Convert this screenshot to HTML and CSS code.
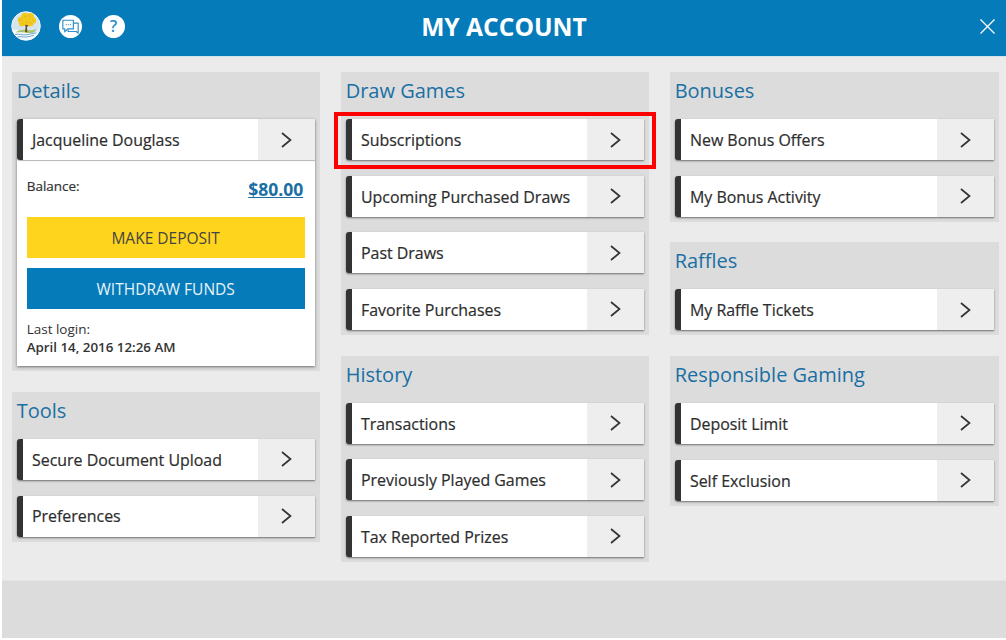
FILE: index.html
```html
<!DOCTYPE html>
<html lang="en">
<head>
<meta charset="utf-8">
<title>My Account</title>
<link rel="stylesheet" href="styles.css">
</head>
<body>
<div class="app">
  <header class="topbar">
    <div class="top-icons">
      <svg class="logo" viewBox="0 0 30 30" width="30" height="30" aria-hidden="true">
        <circle cx="15" cy="15" r="14.3" fill="#d5e5f0" stroke="#eaf2f7" stroke-width="1"/>
        <path d="M1.500 19c4-.5 8 .5 13.500 2.500s9 .5 13.500-2.500c-1 6-7 10-13.500 10S2.500 25 1.500 19z" fill="#f6fafc"/>
        <path d="M4.500 21.500c3-2.500 7-3 11-2.500s7 .5 10-1.500l-2 3.500c-4 1.500-7 1-10 .5s-6-.5-9 0z" fill="#a9c46e"/>
        <path d="M4 23.500c4-1 7 .8 11 .3s7-1.800 10.500-1.800M6.500 26c3-1 6 .5 9 0s5-1 7.500-1.800" fill="none" stroke="#5f9fcb" stroke-width=".9"/>
        <path d="M14.100 21l.5-6-2.800-2.800.8-.5 2.300 2 .5-3h1l-.4 3.500 2.400-1.700.6.600-3 2.800.4 5.600z" fill="#6b4a1f"/>
        <g fill="#f2c91e">
          <circle cx="10" cy="9" r="3.200"/>
          <circle cx="14" cy="5.500" r="3.800"/>
          <circle cx="19.500" cy="5.500" r="3.500"/>
          <circle cx="22" cy="9.500" r="3.200"/>
          <circle cx="15.500" cy="9.500" r="4.500"/>
          <circle cx="11" cy="12.500" r="3"/>
          <circle cx="19.500" cy="12.500" r="3"/>
        </g>
        <path d="M9 8.500l1.500 1M13 5l1.500 1M18 4.500l1.500 1.500M21 9l1 1M15 11l1.500.5M11 12.500l1 .5M19 12l1 .5" stroke="#c9a210" stroke-width=".6" fill="none"/>
      </svg>
      <span class="round-icon">
        <svg viewBox="0 0 24 24" width="23" height="23" aria-hidden="true">
          <path d="M4 5.500h11v9H9l-3 3v-3H4z" fill="#fff" stroke="#2f8fc9" stroke-width="1.200" stroke-linejoin="round"/>
          <path d="M15.500 8.500H20v10.500l-2-1.800H9.500v-2.200" fill="none" stroke="#2f8fc9" stroke-width="1.200" stroke-linejoin="round"/>
          <path d="M7 10h.9M9.200 10h.9M11.400 10h.9" stroke="#2f8fc9" stroke-width="1.200"/>
        </svg>
      </span>
      <span class="round-icon help">?</span>
    </div>
    <h1 class="page-title">MY ACCOUNT</h1>
    <svg class="close" viewBox="0 0 15 15" width="15" height="15" aria-hidden="true">
      <path d="M.5.500l14 14M14.500.500l-14 14" stroke="#fff" stroke-width="1.300" fill="none"/>
    </svg>
  </header>

  <main class="content">
    <div class="col">
      <section class="panel">
        <h2 class="panel-title">Details</h2>
        <div class="card">
          <a class="row row-name"><span class="row-label">Jacqueline Douglass</span><span class="row-arrow"><svg class="chev" viewBox="0 0 11 16" width="11" height="16"><path d="M1 1l8.500 7L1 15" fill="none" stroke="#333" stroke-width="1.700"/></svg></span></a>
          <div class="card-body">
            <div class="balance"><span class="balance-label">Balance:</span><span class="balance-value">$80.00</span></div>
            <div class="btn btn-yellow">MAKE DEPOSIT</div>
            <div class="btn btn-blue">WITHDRAW FUNDS</div>
            <p class="login">Last login:</p>
            <p class="login login-date">April 14, 2016 12:26 AM</p>
          </div>
        </div>
      </section>
      <section class="panel">
        <h2 class="panel-title">Tools</h2>
        <a class="row"><span class="row-label">Secure Document Upload</span><span class="row-arrow"><svg class="chev" viewBox="0 0 11 16" width="11" height="16"><path d="M1 1l8.500 7L1 15" fill="none" stroke="#333" stroke-width="1.700"/></svg></span></a>
        <a class="row"><span class="row-label">Preferences</span><span class="row-arrow"><svg class="chev" viewBox="0 0 11 16" width="11" height="16"><path d="M1 1l8.500 7L1 15" fill="none" stroke="#333" stroke-width="1.700"/></svg></span></a>
      </section>
    </div>

    <div class="col">
      <section class="panel">
        <h2 class="panel-title">Draw Games</h2>
        <a class="row row-marked"><span class="row-label">Subscriptions</span><span class="row-arrow"><svg class="chev" viewBox="0 0 11 16" width="11" height="16"><path d="M1 1l8.500 7L1 15" fill="none" stroke="#333" stroke-width="1.700"/></svg></span></a>
        <a class="row"><span class="row-label">Upcoming Purchased Draws</span><span class="row-arrow"><svg class="chev" viewBox="0 0 11 16" width="11" height="16"><path d="M1 1l8.500 7L1 15" fill="none" stroke="#333" stroke-width="1.700"/></svg></span></a>
        <a class="row"><span class="row-label">Past Draws</span><span class="row-arrow"><svg class="chev" viewBox="0 0 11 16" width="11" height="16"><path d="M1 1l8.500 7L1 15" fill="none" stroke="#333" stroke-width="1.700"/></svg></span></a>
        <a class="row"><span class="row-label">Favorite Purchases</span><span class="row-arrow"><svg class="chev" viewBox="0 0 11 16" width="11" height="16"><path d="M1 1l8.500 7L1 15" fill="none" stroke="#333" stroke-width="1.700"/></svg></span></a>
      </section>
      <section class="panel">
        <h2 class="panel-title">History</h2>
        <a class="row"><span class="row-label">Transactions</span><span class="row-arrow"><svg class="chev" viewBox="0 0 11 16" width="11" height="16"><path d="M1 1l8.500 7L1 15" fill="none" stroke="#333" stroke-width="1.700"/></svg></span></a>
        <a class="row"><span class="row-label">Previously Played Games</span><span class="row-arrow"><svg class="chev" viewBox="0 0 11 16" width="11" height="16"><path d="M1 1l8.500 7L1 15" fill="none" stroke="#333" stroke-width="1.700"/></svg></span></a>
        <a class="row"><span class="row-label">Tax Reported Prizes</span><span class="row-arrow"><svg class="chev" viewBox="0 0 11 16" width="11" height="16"><path d="M1 1l8.500 7L1 15" fill="none" stroke="#333" stroke-width="1.700"/></svg></span></a>
      </section>
    </div>

    <div class="col col-wide">
      <section class="panel">
        <h2 class="panel-title">Bonuses</h2>
        <a class="row"><span class="row-label">New Bonus Offers</span><span class="row-arrow"><svg class="chev" viewBox="0 0 11 16" width="11" height="16"><path d="M1 1l8.500 7L1 15" fill="none" stroke="#333" stroke-width="1.700"/></svg></span></a>
        <a class="row"><span class="row-label">My Bonus Activity</span><span class="row-arrow"><svg class="chev" viewBox="0 0 11 16" width="11" height="16"><path d="M1 1l8.500 7L1 15" fill="none" stroke="#333" stroke-width="1.700"/></svg></span></a>
      </section>
      <section class="panel">
        <h2 class="panel-title">Raffles</h2>
        <a class="row"><span class="row-label">My Raffle Tickets</span><span class="row-arrow"><svg class="chev" viewBox="0 0 11 16" width="11" height="16"><path d="M1 1l8.500 7L1 15" fill="none" stroke="#333" stroke-width="1.700"/></svg></span></a>
      </section>
      <section class="panel">
        <h2 class="panel-title">Responsible Gaming</h2>
        <a class="row"><span class="row-label">Deposit Limit</span><span class="row-arrow"><svg class="chev" viewBox="0 0 11 16" width="11" height="16"><path d="M1 1l8.500 7L1 15" fill="none" stroke="#333" stroke-width="1.700"/></svg></span></a>
        <a class="row"><span class="row-label">Self Exclusion</span><span class="row-arrow"><svg class="chev" viewBox="0 0 11 16" width="11" height="16"><path d="M1 1l8.500 7L1 15" fill="none" stroke="#333" stroke-width="1.700"/></svg></span></a>
      </section>
    </div>
  </main>

  <footer class="footer"></footer>
</div>
</body>
</html>
```
FILE: styles.css
```css
* { box-sizing: border-box; }
html, body { margin: 0; padding: 0; background: #fff; }
body { font-family: "Open Sans", "Liberation Sans", sans-serif; color: #333; overflow: hidden; }

.app { margin-left: 2px; width: 1004px; height: 638px; display: flex; flex-direction: column; background: #ebebeb; }

.topbar { height: 57px; flex: none; background: #067bba; border-bottom: 1px solid #cfe3ee; display: flex; align-items: center; justify-content: space-between; position: relative; padding: 0 11px 3px 9px; }
.top-icons { display: flex; align-items: center; }
.logo { display: block; margin: -2px 18px 0 0; }
.round-icon { width: 23px; height: 23px; border-radius: 50%; background: #fff; display: flex; align-items: center; justify-content: center; margin-right: 20px; }
.help { color: #2f8fc9; font-weight: 600; font-size: 16.500px; line-height: 1; }
.page-title { position: absolute; left: 0; right: 0; top: 11px; margin: 0; text-align: center; color: #fff; font-size: 24.600px; line-height: 32px; font-weight: 700; }
.close { display: block; }

.content { flex: 1; display: flex; padding: 15px 0 0 9.670px; gap: 20.670px; }
.col { width: 308.330px; flex: none; display: flex; flex-direction: column; gap: 20.670px; }
.col-wide { width: 329.330px; }

.panel { background: #dcdcdc; padding: 0 5px 5px 5px; }
.panel-title { margin: 0; height: 47px; padding-top: 5px; font-size: 20px; line-height: 27px; font-weight: 400; color: #1a6fa3; }

.row { display: flex; height: 41px; background: #fff; border-left: 6px solid #333; border-radius: 3px 0 0 3px; box-shadow: 0 1px 2px rgba(0,0,0,.5); margin-bottom: 15.670px; position: relative; }
.row:last-child { margin-bottom: 0; }
.row-label { flex: 1; display: flex; align-items: center; padding: 0.800px 0 0 9.330px; font-size: 15.930px; color: #2d2d2d; -webkit-text-stroke: .2px #2d2d2d; }
.row-arrow { width: 57px; background: #eeeeee; display: flex; align-items: center; justify-content: center; }
.chev { display: block; }
.row-marked::after { content: ""; position: absolute; left: -17.670px; right: -12px; top: -7px; bottom: -9px; border: 4px solid #f00; pointer-events: none; }

.card { background: #fff; box-shadow: 0 1px 3px rgba(0,0,0,.5); border-radius: 3px 0 0 0; }
.row-name { margin-bottom: 0; box-shadow: 0 1px 1px rgba(0,0,0,.3); }
.card-body { padding: 15px 10.300px 10.300px 10px; }
.balance { display: flex; justify-content: space-between; height: 41.670px; }
.balance-label { font-size: 13.500px; line-height: 22px; -webkit-text-stroke: .2px #333; }
.balance-value { font-size: 17.500px; font-weight: 700; line-height: 29px; margin-right: 1.500px; color: #1a6fa3; text-decoration: underline; }
.btn { height: 41px; display: flex; align-items: center; justify-content: center; padding-top: 1px; font-size: 15.500px; }
.btn-yellow { background: #ffd41c; color: #444; margin-bottom: 10.300px; }
.btn-blue { background: #067bba; color: #e8f3f9; margin-bottom: 11px; }
.login { margin: 0; font-size: 13.500px; line-height: 18px; }
.login-date { font-weight: 600; font-size: 13.350px; }

.footer { height: 58px; flex: none; background: #dcdcdc; border-top: 1px solid #e4e4e4; }
```
